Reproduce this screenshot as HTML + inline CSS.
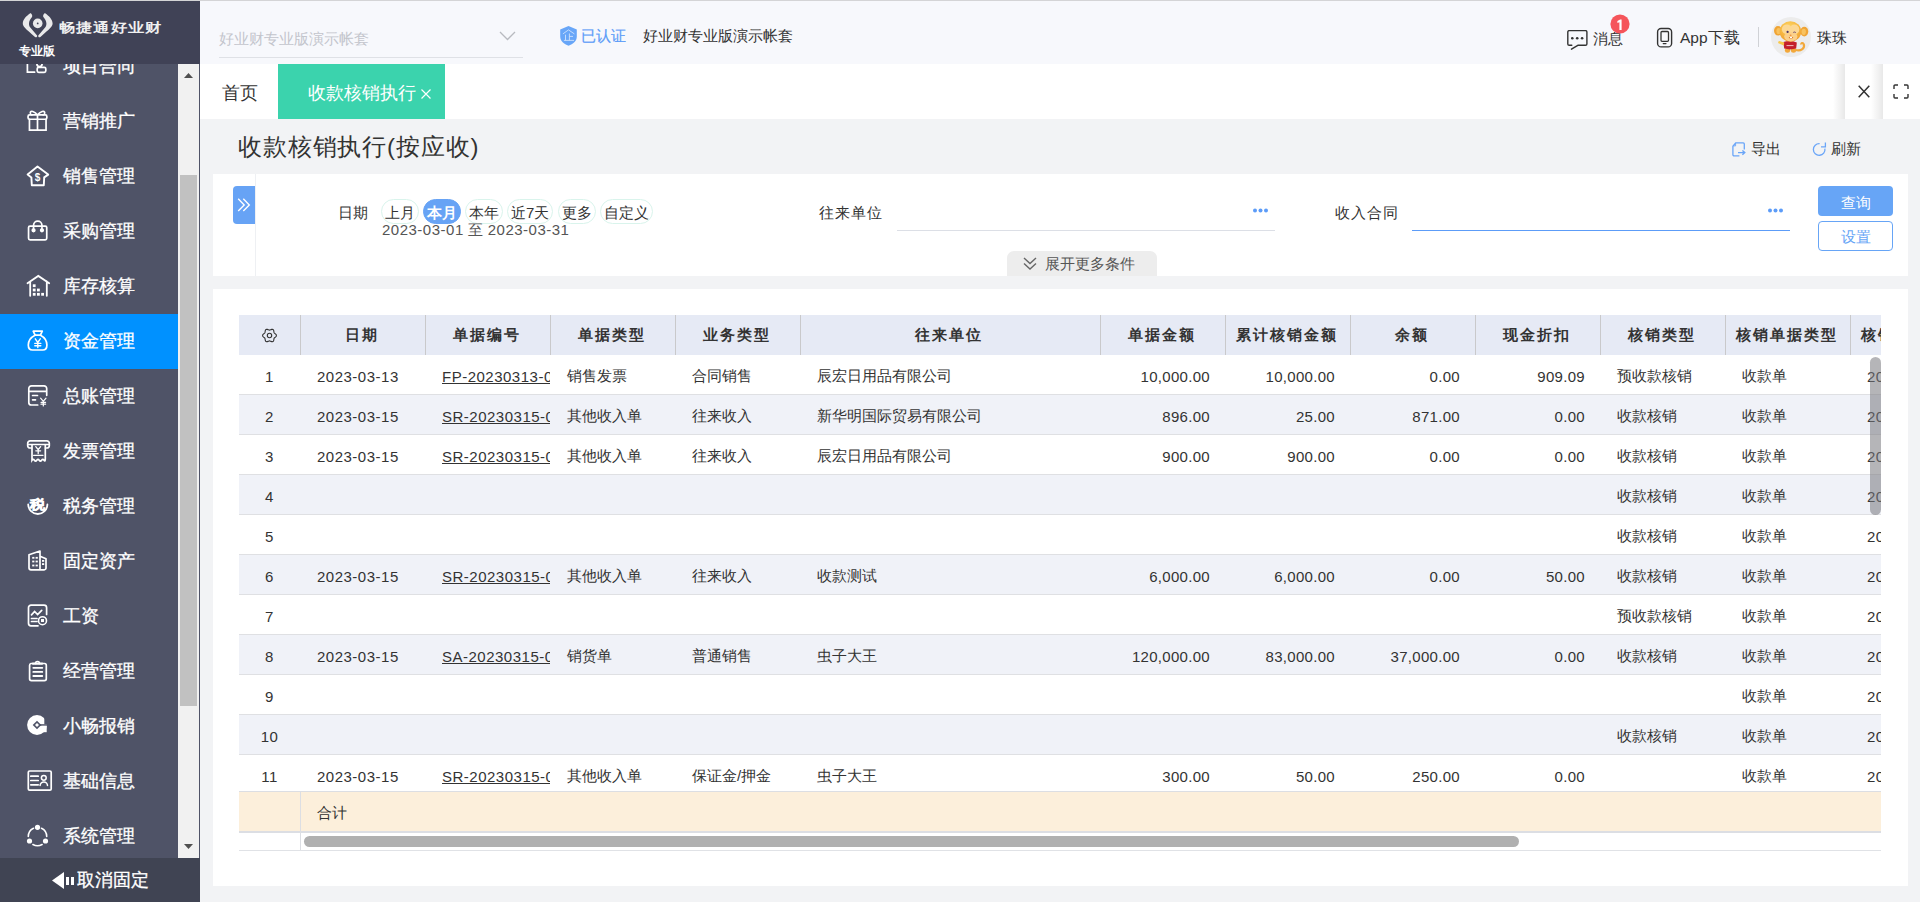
<!DOCTYPE html>
<html><head><meta charset="utf-8">
<style>
*{box-sizing:border-box;margin:0;padding:0}
html,body{width:1920px;height:902px;overflow:hidden;background:#f2f3f5;font-family:"Liberation Sans",sans-serif;color:#333}
.abs{position:absolute}
#topline{left:0;top:0;width:1920px;height:1px;background:#d4d4d6;z-index:20}
/* sidebar */
#side{left:0;top:0;width:200px;height:902px;background:#4f5367;overflow:hidden}
#logo{left:0;top:1px;width:200px;height:63px;background:#404256;z-index:5}
#menu{left:0;top:0;width:178px;height:902px}
.mi{position:absolute;left:0;width:178px;height:55px;color:#fff;font-size:18px;line-height:55px}
.mi.on{background:#0091ff}
.mi svg{position:absolute;left:25px;top:14px;width:28px;height:28px;overflow:visible}
.mi span{position:absolute;left:62.5px;top:0;-webkit-text-stroke:0.3px #fff}
#strack{left:178px;top:64px;width:21px;height:794px;background:#f1f1f1}
#sthumb{left:180px;top:175px;width:17px;height:531px;background:#c1c1c1}
#sline{left:199px;top:64px;width:1px;height:794px;background:#4f5367}
#unpin{left:0;top:858px;width:200px;height:44px;background:#404453;color:#fff;font-size:18px;line-height:44px;z-index:5}
/* header */
#hdr{left:200px;top:0;width:1720px;height:64px;background:#f7f8fc}
#tabs{left:200px;top:64px;width:1720px;height:55px;background:#fff}
.chip{position:absolute;top:25px;height:25px;padding:0 3px;border:1px solid #d9f4ec;border-radius:13px;font-size:15px;line-height:25px;color:#333;white-space:nowrap}
.chip.on{background:#67a3f5;border-color:#67a3f5;color:#fff;font-weight:bold}
.num{font-size:15px;letter-spacing:0.5px}
.th{position:absolute;top:0;height:40px;line-height:40px;text-align:center;font-size:15px;font-weight:bold;letter-spacing:2px;text-indent:-2px;color:#333;white-space:nowrap;overflow:hidden}
.td{position:absolute;height:40px;line-height:42px;font-size:15px;color:#333;white-space:nowrap;overflow:hidden;padding-left:17px}
.td.c{padding:0;text-align:center}
.td.r{padding:0 15px 0 0;text-align:right}
.td.u .num{text-decoration:underline}
.td .num{position:relative;top:1px;font-size:15px;letter-spacing:0.5px;color:#333}
.td.r .num{letter-spacing:0.3px}
</style></head><body>
<div id="topline" class="abs"></div>
<div id="side" class="abs">
  <div id="menu" class="abs">
    <div class="mi" style="top:39px"><svg viewBox="0 0 28 28" fill="none" stroke="#fff" stroke-width="1.7" stroke-linecap="round"><path d="M2.4 5V19.2H9.6M6.6 9.4H10.6"/><circle cx="14.5" cy="11" r="2.6"/><rect x="12.2" y="14.3" width="8.6" height="5" rx="1.5"/></svg><span>项目合同</span></div>
    <div class="mi" style="top:94px"><svg viewBox="0 0 28 28" fill="none" stroke="#fff" stroke-width="1.7" stroke-linecap="round"><rect x="3.05" y="6.95" width="18.8" height="4.3" rx="1.5"/><path d="M4.45 11.3V22.05H21.05V11.3M12.5 7V22M12.5 7C10 3.5 5 1.8 5.3 5C5.5 6.5 6 7 6.8 7M12.5 7C15 3.5 20 1.8 19.7 5C19.5 6.5 19 7 18.2 7"/></svg><span>营销推广</span></div>
    <div class="mi" style="top:149px"><svg viewBox="0 0 28 28" fill="none" stroke="#fff" stroke-width="1.7" stroke-linecap="round"><path d="M12.5 3.6L23.2 11.6L19.2 14.4L18.8 22.2H6.8L6.4 14.4L2.6 11.6Z" stroke-width="1.9" stroke-linejoin="round"/><text x="12.6" y="17.6" fill="#fff" stroke="none" font-size="10" font-weight="bold" text-anchor="middle" font-family="Liberation Sans">$</text></svg><span>销售管理</span></div>
    <div class="mi" style="top:204px"><svg viewBox="0 0 28 28" fill="none" stroke="#fff" stroke-width="1.7" stroke-linecap="round"><rect x="3.55" y="8.05" width="18.2" height="13.8" rx="1.5"/><path d="M8.55 12.3V7.25A4.2 4.2 0 0 1 16.95 7.25V12.3"/><circle cx="8.55" cy="12.3" r="1.3" fill="#fff"/><circle cx="16.95" cy="12.3" r="1.3" fill="#fff"/></svg><span>采购管理</span></div>
    <div class="mi" style="top:259px"><svg viewBox="0 0 28 28" fill="none" stroke="#fff" stroke-width="1.7" stroke-linecap="round"><path d="M2.5 10.2L13.3 2.9L24.2 10.2M5.2 8.5V22.8M21.8 8.5V22.8" stroke-width="1.8"/><g fill="#fff" stroke="none"><rect x="7.8" y="11.3" width="2.8" height="2.8"/><rect x="7.8" y="15.6" width="2.8" height="2.8"/><rect x="12" y="15.6" width="2.8" height="2.8"/><rect x="7.8" y="19.9" width="2.8" height="2.8"/><rect x="12" y="19.9" width="2.8" height="2.8"/><rect x="16.2" y="19.9" width="2.8" height="2.8"/></g></svg><span>库存核算</span></div>
    <div class="mi on" style="top:314px"><svg viewBox="0 0 28 28" fill="none" stroke="#fff" stroke-width="1.7" stroke-linecap="round"><path d="M8.2 3.2H17.3L15.4 7.2H10.1Z" stroke-linejoin="round"/><path d="M10 7.2C5.5 9.5 3.3 13 3.3 17C3.3 20.5 4.8 22 7.5 22H17.8C20.5 22 21.9 20.5 21.9 17C21.9 13 19.8 9.5 15.5 7.2"/><path d="M10.3 10.8L12.8 14.5L15.3 10.8M12.8 14.5V19.5M9.8 15.4H15.8M9.8 17.7H15.8" stroke-width="1.4"/></svg><span>资金管理</span></div>
    <div class="mi" style="top:369px"><svg viewBox="0 0 28 28" fill="none" stroke="#fff" stroke-width="1.7" stroke-linecap="round"><path d="M12.7 22H6.3A2.5 2.5 0 0 1 3.8 19.5V5.6A2.7 2.7 0 0 1 6.5 2.9H19A2.7 2.7 0 0 1 21.7 5.6V12.3M3.8 8.3H21.7"/><path d="M7.6 12.5H12.5M7.6 16.8H10.5" stroke-width="1.7"/><path d="M15.6 15.2L18.3 18.4L21 15.2M18.3 18.4V23M16 19.3H20.6M16 21.2H20.6" stroke-width="1.2"/></svg><span>总账管理</span></div>
    <div class="mi" style="top:424px"><svg viewBox="0 0 28 28" fill="none" stroke="#fff" stroke-width="1.7" stroke-linecap="round"><path d="M6.5 10H5A2.3 2.3 0 0 1 2.7 7.7V5.3A2.4 2.4 0 0 1 5.1 2.9H21.9A2.4 2.4 0 0 1 24.3 5.3V7.7A2.3 2.3 0 0 1 22 10H20.6M3.5 6.5H23.5"/><path d="M7 7V22.3Q8.2 20.6 9.4 22.3T11.8 22.3T14.2 22.3T16.6 22.3T19 22.3T20.3 21V7" stroke-width="1.7"/><path d="M10.8 8.6L13.2 11.6L15.6 8.6M13.2 11.6V15.5M10.8 12.8H15.6M8.6 17.3H18" stroke-width="1.3"/></svg><span>发票管理</span></div>
    <div class="mi" style="top:479px"><svg viewBox="0 0 28 28" fill="none" stroke="#fff" stroke-width="1.7" stroke-linecap="round"><path d="M3.2 11.4A9.6 9.6 0 0 0 22.4 11.4" stroke-width="1.8"/><text x="0" y="0" transform="translate(12.7 15.6) scale(1.05 0.9)" fill="#fff" stroke="#fff" stroke-width="0.6" font-size="15" font-weight="bold" text-anchor="middle">税</text></svg><span>税务管理</span></div>
    <div class="mi" style="top:534px"><svg viewBox="0 0 28 28" fill="none" stroke="#fff" stroke-width="1.7" stroke-linecap="round"><path d="M15 21.8V3L4 6.8V19.8A2 2 0 0 0 6 21.8H19.2A1.8 1.8 0 0 0 21 20V10.8L15 8.2" stroke-linejoin="round"/><g fill="#fff" stroke="none"><rect x="7.2" y="8.9" width="2.2" height="1.8"/><rect x="10.6" y="8.9" width="2.2" height="1.8"/><rect x="7.2" y="12.6" width="2.2" height="1.8"/><rect x="10.6" y="12.6" width="2.2" height="1.8"/><rect x="7.2" y="16.6" width="2.2" height="1.8"/><rect x="10.6" y="16.6" width="2.2" height="1.8"/><rect x="17" y="12" width="2.2" height="1.8"/><rect x="17" y="15.2" width="2.2" height="1.8"/></g></svg><span>固定资产</span></div>
    <div class="mi" style="top:589px"><svg viewBox="0 0 28 28" fill="none" stroke="#fff" stroke-width="1.7" stroke-linecap="round"><path d="M13 22.8H6A2.5 2.5 0 0 1 3.5 20.3V4.8A2.6 2.6 0 0 1 6.1 2.2H19A2.6 2.6 0 0 1 21.6 4.8V11.5"/><path d="M6.5 11.8L9.6 8.5L12.6 11.5L16.7 7.4M6.5 15.5H12M6.5 18.5H12" stroke-width="1.7"/><circle cx="17.5" cy="17.7" r="4" stroke-width="1.6"/><rect x="16" y="16" width="3" height="3" fill="#fff" stroke="none"/></svg><span>工资</span></div>
    <div class="mi" style="top:644px"><svg viewBox="0 0 28 28" fill="none" stroke="#fff" stroke-width="1.7" stroke-linecap="round"><path d="M8 5.5H6A1.9 1.9 0 0 0 4.6 7.4V20.8A1.9 1.9 0 0 0 6.5 22.7H19.4A1.9 1.9 0 0 0 21.3 20.8V7.4A1.9 1.9 0 0 0 19.5 5.5H17M10.5 5.5A2 2 0 0 1 14.5 5.5"/><path d="M8 5.7H17" stroke-width="2.2"/><path d="M8.3 9.8H17.3M8.3 13.9H17.3M8.3 18H17.3" stroke-width="1.8"/></svg><span>经营管理</span></div>
    <div class="mi" style="top:699px"><svg viewBox="0 0 28 28" fill="none" stroke="#fff" stroke-width="1.7" stroke-linecap="round"><circle cx="12" cy="12" r="9.9" fill="#fff" stroke="none"/><path d="M19.3 0H26V11.3H19.3Z" fill="#4f5367" stroke="none"/><rect x="14.5" y="11.2" width="10" height="1.6" fill="#4f5367" stroke="none"/><path d="M12 7.7L16.3 12L12 16.3L7.7 12Z" fill="#4f5367" stroke="none"/><path d="M12 10L14 12L12 14L10 12Z" fill="#fff" stroke="none"/><rect x="16.5" y="12.8" width="5.2" height="6.4" fill="#fff" stroke="none"/></svg><span>小畅报销</span></div>
    <div class="mi" style="top:754px"><svg viewBox="0 0 28 28" fill="none" stroke="#fff" stroke-width="1.7" stroke-linecap="round"><rect x="3.3" y="3" width="22.9" height="19.2" rx="1.3"/><path d="M5.8 8.2H13.2M5.8 12.5H13.2M5.8 16.8H13.2" stroke-width="1.7"/><circle cx="18.8" cy="9.8" r="2.4" stroke-width="1.5"/><path d="M15.1 17.6A3.7 3.7 0 0 1 22.5 17.6" stroke-width="1.5"/></svg><span>基础信息</span></div>
    <div class="mi" style="top:809px"><svg viewBox="0 0 28 28" fill="none" stroke="#fff" stroke-width="1.7" stroke-linecap="round"><path d="M8.47 5.23 A9.2 9.2 0 0 0 3.30 13.50 M16.53 5.23 A9.2 9.2 0 0 1 21.70 13.50 M17.10 21.47 A9.2 9.2 0 0 1 7.90 21.47" stroke-width="1.6"/><circle cx="12.5" cy="4.3" r="2.6" fill="#fff" stroke="none"/><circle cx="4.5" cy="18" r="2.6" fill="#fff" stroke="none"/><circle cx="20.5" cy="18" r="2.6" fill="#fff" stroke="none"/></svg><span>系统管理</span></div>
  </div>
  <div id="logo" class="abs">
    <svg class="abs" style="left:18px;top:8px" width="40" height="32" viewBox="0 0 40 32"><path d="M12.2 4.2C8.5 6.8 4.8 10.5 4.8 14.5C4.8 17.3 7 19.3 17 28C18.3 28.9 19.5 27.8 19.1 26.5L12.3 18.6C11.4 17.5 11 16.2 11 14.5C11 11.8 12.5 9.8 14 7.9C14.7 6.8 13.6 3.9 12.2 4.2Z" fill="#e9e9ea"/><path d="M27.2 4.2C30.9 6.8 34.6 10.5 34.6 14.5C34.6 17.3 32.4 19.3 22.4 28C21.1 28.9 19.9 27.8 20.3 26.5L27.1 18.6C28 17.5 28.4 16.2 28.4 14.5C28.4 11.8 26.9 9.8 25.4 7.9C24.7 6.8 25.8 3.9 27.2 4.2Z" fill="#e9e9ea"/><circle cx="19.7" cy="14.4" r="4.8" fill="#e9e9ea"/><circle cx="19.7" cy="14.4" r="0.9" fill="#404256"/></svg>
    <div class="abs" style="left:59px;top:17px;font-size:16px;line-height:20px;color:#f0f0f0;font-weight:bold;letter-spacing:1.2px;transform:scaleY(0.8);transform-origin:0 50%">畅捷通好业财</div>
    <div class="abs" style="left:19px;top:42px;font-size:12px;line-height:16px;color:#fff;font-weight:bold">专业版</div>
  </div>
  <div id="strack" class="abs"></div>
  <div id="sthumb" class="abs"></div>
  <div id="sline" class="abs"></div>
  <svg class="abs" style="left:184px;top:73px" width="9" height="5"><path d="M0 5L4.5 0 9 5z" fill="#505050"/></svg>
  <svg class="abs" style="left:184px;top:844px" width="9" height="5"><path d="M0 0h9L4.5 5z" fill="#505050"/></svg>
  <div id="unpin" class="abs">
    <svg class="abs" style="left:52px;top:14px" width="24" height="17" viewBox="0 0 24 17"><path d="M12 0v17L0 8.5z" fill="#fff"/><rect x="14" y="5" width="3" height="8" fill="#fff"/><rect x="19" y="5" width="3" height="8" fill="#fff"/></svg>
    <span class="abs" style="left:77px;top:0;-webkit-text-stroke:0.3px #fff">取消固定</span>
  </div>
</div>
<div id="hdr" class="abs">
  <div class="abs" style="left:19px;top:28px;font-size:15px;line-height:22px;color:#c3c5cc">好业财专业版演示帐套</div>
  <div class="abs" style="left:19px;top:57px;width:304px;height:1px;background:#dfe1e6"></div>
  <svg class="abs" style="left:299px;top:31px" width="17" height="10" viewBox="0 0 17 10"><path d="M1 1l7.5 7.5L16 1" fill="none" stroke="#b8bac0" stroke-width="1.3"/></svg>
  <svg class="abs" style="left:360px;top:26px" width="17" height="20" viewBox="0 0 17 20"><path d="M8.5 0L16.8 3.5V10.5C16.8 15 13 18.2 8.5 19.8C4 18.2 0.2 15 0.2 10.5V3.5Z" fill="#68a6f8"/><path d="M2.9 7.9L8.5 3.9L14.4 7.9M9.4 7.5V14.4M9.4 10.4H13M5.5 8.7V14.4M3.9 14.4H14" fill="none" stroke="#dbe9fd" stroke-width="0.8"/></svg>
  <div class="abs" style="left:381px;top:26px;font-size:15px;line-height:20px;color:#5c9cf8;-webkit-text-stroke:0.2px #5c9cf8">已认证</div>
  <div class="abs" style="left:443px;top:26px;font-size:15px;line-height:20px;color:#333">好业财专业版演示帐套</div>
  <svg class="abs" style="left:1367px;top:30px" width="21" height="21" viewBox="0 0 21 21"><path d="M4.8 15.3H2.2A1.4 1.4 0 0 1 0.8 13.9V2A1.4 1.4 0 0 1 2.2 0.6H18.5A1.4 1.4 0 0 1 19.9 2V13.9A1.4 1.4 0 0 1 18.5 15.3H10.8L4.5 19.2" fill="none" stroke="#333" stroke-width="1.4" stroke-linejoin="round" stroke-linecap="round"/><circle cx="5.3" cy="8.2" r="1.3" fill="#333"/><circle cx="10.2" cy="8.2" r="1.3" fill="#333"/><circle cx="15.1" cy="8.2" r="1.3" fill="#333"/></svg>
  <div class="abs" style="left:1393px;top:29px;font-size:15px;line-height:20px;color:#333">消息</div>
  <svg class="abs" style="left:1410px;top:14px" width="20" height="20" viewBox="0 0 20 20"><circle cx="10" cy="10" r="9.6" fill="#f5555b"/><path d="M10.1 5.4H11.6V16H9.4V8.3L7.4 9V7Z" fill="#fff"/></svg>
  <svg class="abs" style="left:1456px;top:27px" width="17" height="21" viewBox="0 0 17 21"><rect x="1.6" y="1.5" width="14" height="18.4" rx="3.5" fill="none" stroke="#333" stroke-width="1.4"/><rect x="5" y="4.5" width="7.5" height="9.8" rx="1" fill="none" stroke="#333" stroke-width="1.3"/><path d="M7.2 16.6H10" stroke="#333" stroke-width="1.2" stroke-linecap="round"/></svg>
  <div class="abs" style="left:1480px;top:28px;font-size:15.5px;line-height:20px;color:#333">App下载</div>
  <div class="abs" style="left:1558px;top:27px;width:1px;height:20px;background:#d0d2d6"></div>
  <div class="abs" style="left:1571px;top:17px;width:40px;height:40px;border-radius:50%;background:#ececec;overflow:hidden">
    <svg width="40" height="40" viewBox="0 0 40 40">
      <defs><radialGradient id="hg" cx="0.45" cy="0.3" r="0.75"><stop offset="0" stop-color="#fdd866"/><stop offset="0.6" stop-color="#f6b53e"/><stop offset="1" stop-color="#ee9a30"/></radialGradient></defs>
      <path d="M24.5 33C30.5 34.5 34 31 32.8 27.3C32 25.3 30 25.8 30.3 27.5" fill="none" stroke="#f2a83a" stroke-width="2.2"/>
      <ellipse cx="16.5" cy="33.3" rx="2.6" ry="2.5" fill="#f3a83a"/><ellipse cx="22.5" cy="33.3" rx="2.6" ry="2.5" fill="#f3a83a"/>
      <path d="M12.3 25Q19 22.8 25.8 25.4L25.2 31.6Q19 33.2 13.2 31.6Z" fill="#c41f2b"/>
      <path d="M8.5 28.5l4.4-.3l-.3 2.2l-4.3.4z" fill="#fff" opacity="0"/>
      <path d="M13.3 25.6L8.3 24Q6.6 24.4 7.4 26.3L12.8 28.6Z" fill="#f8c94a"/>
      <rect x="15.5" y="28" width="7" height="1.1" fill="#f5d0d0" opacity="0.8"/>
      <ellipse cx="7" cy="13.8" rx="4" ry="4.8" fill="#f0a434"/><ellipse cx="7.6" cy="14" rx="2.2" ry="3.1" fill="#f8c25e"/>
      <ellipse cx="33.3" cy="14.6" rx="4" ry="4.8" fill="#f0a434"/><ellipse cx="32.7" cy="14.8" rx="2.2" ry="3.1" fill="#f8c25e"/>
      <ellipse cx="19.4" cy="14.5" rx="10.8" ry="10.3" fill="url(#hg)"/>
      <circle cx="15.8" cy="12.3" r="4.9" fill="#fcd894"/><circle cx="23.4" cy="12.5" r="4.9" fill="#fcd894"/>
      <ellipse cx="19.8" cy="19.6" rx="6.6" ry="4.9" fill="#fbd08a"/>
      <circle cx="16.6" cy="14.9" r="1.1" fill="#4a3065"/>
      <path d="M22.3 15.4Q23.6 14.6 24.8 15.5" fill="none" stroke="#5a3a6a" stroke-width="0.9"/>
      <ellipse cx="19.6" cy="18.2" rx="1" ry="0.7" fill="#ef8e3e"/>
      <path d="M17.6 20Q20 23.8 22.4 20Z" fill="#d9782b"/><rect x="19" y="20" width="2" height="1.3" fill="#fff"/>
    </svg>
  </div>
  <div class="abs" style="left:1617px;top:28px;font-size:15px;line-height:20px;color:#333">珠珠</div>
</div>
<div id="tabs" class="abs">
  <div class="abs" style="left:22px;top:82px;font-size:18px;line-height:22px;color:#333;top:18px">首页</div>
  <div class="abs" style="left:78px;top:0;width:167px;height:55px;background:#3bd3ad"></div>
  <div class="abs" style="left:108px;top:18px;font-size:18px;line-height:22px;color:#fff">收款核销执行</div>
  <svg class="abs" style="left:221px;top:25px" width="10" height="10" viewBox="0 0 10 10"><path d="M0.5 0.5l9 9M9.5 0.5l-9 9" stroke="#fff" stroke-width="1.2"/></svg>
  <div class="abs" style="left:1633px;top:0;width:12px;height:55px;background:linear-gradient(to right,rgba(0,0,0,0),rgba(0,0,0,0.09))"></div><div class="abs" style="left:1645px;top:0;width:38px;height:55px;background:#fff"></div>
  <svg class="abs" style="left:1658px;top:85px;top:21px" width="12" height="13" viewBox="0 0 12 13"><path d="M0.7 0.7l10.6 11.6M11.3 0.7L0.7 12.3" stroke="#333" stroke-width="1.5"/></svg>
  <div class="abs" style="left:1671px;top:0;width:12px;height:55px;background:linear-gradient(to right,rgba(0,0,0,0),rgba(0,0,0,0.09))"></div><div class="abs" style="left:1683px;top:0;width:37px;height:55px;background:#fff"></div>
  <svg class="abs" style="left:1693px;top:20px" width="16" height="15" viewBox="0 0 16 15"><path d="M1 5V2a1 1 0 0 1 1-1h3M11 1h3a1 1 0 0 1 1 1v3M15 10v3a1 1 0 0 1-1 1h-3M5 14H2a1 1 0 0 1-1-1v-3" fill="none" stroke="#333" stroke-width="1.4"/></svg>
</div>
<div id="title" class="abs" style="left:238px;top:132px;font-size:24px;line-height:30px;color:#333;letter-spacing:0.85px">收款核销执行(按应收)</div>
<svg class="abs" style="left:1732px;top:142px" width="14" height="15" viewBox="0 0 14 15"><path d="M7.4 13.9H2A1.1 1.1 0 0 1 0.9 12.8V4.2L3.9 0.8H11.2A1.1 1.1 0 0 1 12.3 1.9V7.4" fill="none" stroke="#6aa5f8" stroke-width="1.3" stroke-linejoin="round"/><path d="M1.6 3.9H3.6V1.8" fill="none" stroke="#6aa5f8" stroke-width="0.9"/><path d="M6 10.6H12.6M10.4 8.4L12.8 10.6L10.4 12.8" fill="none" stroke="#6aa5f8" stroke-width="1.4"/></svg>
<div class="abs" style="left:1751px;top:139px;font-size:15px;line-height:20px;color:#333">导出</div>
<svg class="abs" style="left:1811px;top:141px" width="16" height="16" viewBox="0 0 16 16"><path d="M8.6 2.7A5.8 5.8 0 1 0 13.9 7.6" fill="none" stroke="#6aa5f8" stroke-width="1.3"/><path d="M14.4 1.4V5.9H10" fill="none" stroke="#6aa5f8" stroke-width="1.3"/></svg>
<div class="abs" style="left:1831px;top:139px;font-size:15px;line-height:20px;color:#333">刷新</div>

<div id="filter" class="abs" style="left:213px;top:174px;width:1695px;height:102px;background:#fff">
  <div class="abs" style="left:42px;top:0;width:1px;height:102px;background:#eef0f3"></div>
  <div class="abs" style="left:20px;top:12px;width:22px;height:38px;background:#67a3f5;border-radius:4px 0 0 4px"></div>
  <svg class="abs" style="left:24px;top:23.5px" width="14" height="14" viewBox="0 0 14 14"><path d="M1.2 0.8l6 6.1-6 6.1M6.3 0.8l6 6.1-6 6.1" fill="none" stroke="#fff" stroke-width="1.4"/></svg>
  <div class="abs" style="left:125px;top:29px;font-size:15px;line-height:20px;color:#333">日期</div>
  <div class="chip" style="left:168px">上月</div>
  <div class="chip on" style="left:210px">本月</div>
  <div class="chip" style="left:252px">本年</div>
  <div class="chip" style="left:294px">近<span class="n7">7</span>天</div>
  <div class="chip" style="left:345px">更多</div>
  <div class="chip" style="left:387px">自定义</div>
  <div class="abs" style="left:169px;top:47px;font-size:15px;line-height:18px;color:#555"><span class="num">2023-03-01</span><span style="margin:0 4.5px">至</span><span class="num">2023-03-31</span></div>
  <div class="abs" style="left:606px;top:29px;font-size:15px;line-height:20px;color:#333;letter-spacing:1px">往来单位</div>
  <div class="abs" style="left:684px;top:56px;width:378px;height:1px;background:#dcdfe6"></div>
  <svg class="abs" style="left:1040px;top:34px" width="15" height="5"><circle cx="2" cy="2.5" r="2" fill="#5c9cf8"/><circle cx="7.5" cy="2.5" r="2" fill="#5c9cf8"/><circle cx="13" cy="2.5" r="2" fill="#5c9cf8"/></svg>
  <div class="abs" style="left:1122px;top:29px;font-size:15px;line-height:20px;color:#333;letter-spacing:1px">收入合同</div>
  <div class="abs" style="left:1199px;top:56px;width:378px;height:1px;background:#5c9cf8"></div>
  <svg class="abs" style="left:1555px;top:34px" width="15" height="5"><circle cx="2" cy="2.5" r="2" fill="#5c9cf8"/><circle cx="7.5" cy="2.5" r="2" fill="#5c9cf8"/><circle cx="13" cy="2.5" r="2" fill="#5c9cf8"/></svg>
  <div class="abs" style="left:1605px;top:12px;width:75px;height:30px;background:#67a5f6;border-radius:4px;color:#fff;font-size:15px;line-height:34px;text-align:center">查询</div>
  <div class="abs" style="left:1605px;top:47px;width:75px;height:30px;border:1px solid #67a5f6;border-radius:4px;color:#67a5f6;font-size:15px;line-height:30px;text-align:center">设置</div>
  <div class="abs" style="left:794px;top:77px;width:150px;height:25px;background:#ededed;border-radius:7px 7px 0 0"></div>
  <svg class="abs" style="left:810px;top:83px" width="14" height="13" viewBox="0 0 14 13"><path d="M1 1l6 5.5L13 1M1 6.5l6 5.5 6-5.5" fill="none" stroke="#666" stroke-width="1.4"/></svg>
  <div class="abs" style="left:832px;top:80px;font-size:15px;line-height:20px;color:#555">展开更多条件</div>
</div>
<div id="tpanel" class="abs" style="left:213px;top:289px;width:1695px;height:597px;background:#fff"></div>
<div id="tbl" class="abs" style="left:239px;top:315px;width:1642px;height:536px;overflow:hidden">
<div class="abs" style="left:0;top:0;width:1642px;height:40px;background:#e6eaf5"></div>
<svg class="abs" style="left:22.8px;top:12.5px" width="15" height="15" viewBox="0 0 15 15"><path d="M14.40 7.50 L14.27 8.09 L13.90 8.63 L13.39 9.08 L12.89 9.46 L12.46 9.81 L12.16 10.19 L11.99 10.64 L11.90 11.19 L11.81 11.81 L11.68 12.48 L11.40 13.06 L10.95 13.48 L10.37 13.66 L9.72 13.61 L9.08 13.39 L8.50 13.15 L7.98 12.96 L7.50 12.88 L7.02 12.96 L6.50 13.15 L5.92 13.39 L5.28 13.61 L4.63 13.66 L4.05 13.48 L3.60 13.06 L3.32 12.48 L3.19 11.81 L3.10 11.19 L3.01 10.64 L2.84 10.19 L2.54 9.81 L2.11 9.46 L1.61 9.08 L1.10 8.63 L0.73 8.09 L0.60 7.50 L0.73 6.91 L1.10 6.37 L1.61 5.92 L2.11 5.54 L2.54 5.19 L2.84 4.81 L3.01 4.36 L3.10 3.81 L3.19 3.19 L3.32 2.52 L3.60 1.94 L4.05 1.52 L4.63 1.34 L5.28 1.39 L5.92 1.61 L6.50 1.85 L7.02 2.04 L7.50 2.12 L7.98 2.04 L8.50 1.85 L9.08 1.61 L9.72 1.39 L10.37 1.34 L10.95 1.52 L11.40 1.94 L11.68 2.52 L11.81 3.19 L11.90 3.81 L11.99 4.36 L12.16 4.81 L12.46 5.19 L12.89 5.54 L13.39 5.92 L13.90 6.37 L14.27 6.91Z" fill="none" stroke="#333" stroke-width="1.1" stroke-linejoin="round"/><circle cx="7.5" cy="7.5" r="2.2" fill="none" stroke="#333" stroke-width="1.1"/></svg>
<div class="abs" style="left:61px;top:0;width:1px;height:40px;background:#c9c9cb"></div>
<div class="th" style="left:61px;width:125px">日期</div>
<div class="abs" style="left:186px;top:0;width:1px;height:40px;background:#c9c9cb"></div>
<div class="th" style="left:186px;width:125px">单据编号</div>
<div class="abs" style="left:311px;top:0;width:1px;height:40px;background:#c9c9cb"></div>
<div class="th" style="left:311px;width:125px">单据类型</div>
<div class="abs" style="left:436px;top:0;width:1px;height:40px;background:#c9c9cb"></div>
<div class="th" style="left:436px;width:125px">业务类型</div>
<div class="abs" style="left:561px;top:0;width:1px;height:40px;background:#c9c9cb"></div>
<div class="th" style="left:561px;width:300px">往来单位</div>
<div class="abs" style="left:861px;top:0;width:1px;height:40px;background:#c9c9cb"></div>
<div class="th" style="left:861px;width:125px">单据金额</div>
<div class="abs" style="left:986px;top:0;width:1px;height:40px;background:#c9c9cb"></div>
<div class="th" style="left:986px;width:125px">累计核销金额</div>
<div class="abs" style="left:1111px;top:0;width:1px;height:40px;background:#c9c9cb"></div>
<div class="th" style="left:1111px;width:125px">余额</div>
<div class="abs" style="left:1236px;top:0;width:1px;height:40px;background:#c9c9cb"></div>
<div class="th" style="left:1236px;width:125px">现金折扣</div>
<div class="abs" style="left:1361px;top:0;width:1px;height:40px;background:#c9c9cb"></div>
<div class="th" style="left:1361px;width:125px">核销类型</div>
<div class="abs" style="left:1486px;top:0;width:1px;height:40px;background:#c9c9cb"></div>
<div class="th" style="left:1486px;width:125px">核销单据类型</div>
<div class="abs" style="left:1611px;top:0;width:1px;height:40px;background:#c9c9cb"></div>
<div class="th" style="left:1611px;width:125px">核销单据编号</div>
<div class="abs" style="left:0;top:40px;width:1642px;height:40px;background:#fff"></div>
<div class="abs" style="left:0;top:79px;width:1642px;height:1px;background:#dfe0e3"></div>
<div class="td c" style="left:0px;top:40px;width:61px"><span class="num">1</span></div>
<div class="td" style="left:61px;top:40px;width:125px"><span class="num">2023-03-13</span></div>
<div class="td u" style="left:186px;top:40px;width:125px"><span class="num">FP-20230313-0001</span></div>
<div class="td" style="left:311px;top:40px;width:125px">销售发票</div>
<div class="td" style="left:436px;top:40px;width:125px">合同销售</div>
<div class="td" style="left:561px;top:40px;width:300px">辰宏日用品有限公司</div>
<div class="td r" style="left:861px;top:40px;width:125px"><span class="num">10,000.00</span></div>
<div class="td r" style="left:986px;top:40px;width:125px"><span class="num">10,000.00</span></div>
<div class="td r" style="left:1111px;top:40px;width:125px"><span class="num">0.00</span></div>
<div class="td r" style="left:1236px;top:40px;width:125px"><span class="num">909.09</span></div>
<div class="td" style="left:1361px;top:40px;width:125px">预收款核销</div>
<div class="td" style="left:1486px;top:40px;width:125px">收款单</div>
<div class="td" style="left:1611px;top:40px;width:125px"><span class="num">2023-03-13</span></div>
<div class="abs" style="left:0;top:80px;width:1642px;height:40px;background:#f0f2f8"></div>
<div class="abs" style="left:0;top:119px;width:1642px;height:1px;background:#dfe0e3"></div>
<div class="td c" style="left:0px;top:80px;width:61px"><span class="num">2</span></div>
<div class="td" style="left:61px;top:80px;width:125px"><span class="num">2023-03-15</span></div>
<div class="td u" style="left:186px;top:80px;width:125px"><span class="num">SR-20230315-0001</span></div>
<div class="td" style="left:311px;top:80px;width:125px">其他收入单</div>
<div class="td" style="left:436px;top:80px;width:125px">往来收入</div>
<div class="td" style="left:561px;top:80px;width:300px">新华明国际贸易有限公司</div>
<div class="td r" style="left:861px;top:80px;width:125px"><span class="num">896.00</span></div>
<div class="td r" style="left:986px;top:80px;width:125px"><span class="num">25.00</span></div>
<div class="td r" style="left:1111px;top:80px;width:125px"><span class="num">871.00</span></div>
<div class="td r" style="left:1236px;top:80px;width:125px"><span class="num">0.00</span></div>
<div class="td" style="left:1361px;top:80px;width:125px">收款核销</div>
<div class="td" style="left:1486px;top:80px;width:125px">收款单</div>
<div class="td" style="left:1611px;top:80px;width:125px"><span class="num">2023-03-15</span></div>
<div class="abs" style="left:0;top:120px;width:1642px;height:40px;background:#fff"></div>
<div class="abs" style="left:0;top:159px;width:1642px;height:1px;background:#dfe0e3"></div>
<div class="td c" style="left:0px;top:120px;width:61px"><span class="num">3</span></div>
<div class="td" style="left:61px;top:120px;width:125px"><span class="num">2023-03-15</span></div>
<div class="td u" style="left:186px;top:120px;width:125px"><span class="num">SR-20230315-0002</span></div>
<div class="td" style="left:311px;top:120px;width:125px">其他收入单</div>
<div class="td" style="left:436px;top:120px;width:125px">往来收入</div>
<div class="td" style="left:561px;top:120px;width:300px">辰宏日用品有限公司</div>
<div class="td r" style="left:861px;top:120px;width:125px"><span class="num">900.00</span></div>
<div class="td r" style="left:986px;top:120px;width:125px"><span class="num">900.00</span></div>
<div class="td r" style="left:1111px;top:120px;width:125px"><span class="num">0.00</span></div>
<div class="td r" style="left:1236px;top:120px;width:125px"><span class="num">0.00</span></div>
<div class="td" style="left:1361px;top:120px;width:125px">收款核销</div>
<div class="td" style="left:1486px;top:120px;width:125px">收款单</div>
<div class="td" style="left:1611px;top:120px;width:125px"><span class="num">2023-03-15</span></div>
<div class="abs" style="left:0;top:160px;width:1642px;height:40px;background:#f0f2f8"></div>
<div class="abs" style="left:0;top:199px;width:1642px;height:1px;background:#dfe0e3"></div>
<div class="td c" style="left:0px;top:160px;width:61px"><span class="num">4</span></div>
<div class="td" style="left:1361px;top:160px;width:125px">收款核销</div>
<div class="td" style="left:1486px;top:160px;width:125px">收款单</div>
<div class="td" style="left:1611px;top:160px;width:125px"><span class="num">2023-03-15</span></div>
<div class="abs" style="left:0;top:200px;width:1642px;height:40px;background:#fff"></div>
<div class="abs" style="left:0;top:239px;width:1642px;height:1px;background:#dfe0e3"></div>
<div class="td c" style="left:0px;top:200px;width:61px"><span class="num">5</span></div>
<div class="td" style="left:1361px;top:200px;width:125px">收款核销</div>
<div class="td" style="left:1486px;top:200px;width:125px">收款单</div>
<div class="td" style="left:1611px;top:200px;width:125px"><span class="num">2023-03-15</span></div>
<div class="abs" style="left:0;top:240px;width:1642px;height:40px;background:#f0f2f8"></div>
<div class="abs" style="left:0;top:279px;width:1642px;height:1px;background:#dfe0e3"></div>
<div class="td c" style="left:0px;top:240px;width:61px"><span class="num">6</span></div>
<div class="td" style="left:61px;top:240px;width:125px"><span class="num">2023-03-15</span></div>
<div class="td u" style="left:186px;top:240px;width:125px"><span class="num">SR-20230315-0003</span></div>
<div class="td" style="left:311px;top:240px;width:125px">其他收入单</div>
<div class="td" style="left:436px;top:240px;width:125px">往来收入</div>
<div class="td" style="left:561px;top:240px;width:300px">收款测试</div>
<div class="td r" style="left:861px;top:240px;width:125px"><span class="num">6,000.00</span></div>
<div class="td r" style="left:986px;top:240px;width:125px"><span class="num">6,000.00</span></div>
<div class="td r" style="left:1111px;top:240px;width:125px"><span class="num">0.00</span></div>
<div class="td r" style="left:1236px;top:240px;width:125px"><span class="num">50.00</span></div>
<div class="td" style="left:1361px;top:240px;width:125px">收款核销</div>
<div class="td" style="left:1486px;top:240px;width:125px">收款单</div>
<div class="td" style="left:1611px;top:240px;width:125px"><span class="num">2023-03-15</span></div>
<div class="abs" style="left:0;top:280px;width:1642px;height:40px;background:#fff"></div>
<div class="abs" style="left:0;top:319px;width:1642px;height:1px;background:#dfe0e3"></div>
<div class="td c" style="left:0px;top:280px;width:61px"><span class="num">7</span></div>
<div class="td" style="left:1361px;top:280px;width:125px">预收款核销</div>
<div class="td" style="left:1486px;top:280px;width:125px">收款单</div>
<div class="td" style="left:1611px;top:280px;width:125px"><span class="num">2023-03-15</span></div>
<div class="abs" style="left:0;top:320px;width:1642px;height:40px;background:#f0f2f8"></div>
<div class="abs" style="left:0;top:359px;width:1642px;height:1px;background:#dfe0e3"></div>
<div class="td c" style="left:0px;top:320px;width:61px"><span class="num">8</span></div>
<div class="td" style="left:61px;top:320px;width:125px"><span class="num">2023-03-15</span></div>
<div class="td u" style="left:186px;top:320px;width:125px"><span class="num">SA-20230315-0001</span></div>
<div class="td" style="left:311px;top:320px;width:125px">销货单</div>
<div class="td" style="left:436px;top:320px;width:125px">普通销售</div>
<div class="td" style="left:561px;top:320px;width:300px">虫子大王</div>
<div class="td r" style="left:861px;top:320px;width:125px"><span class="num">120,000.00</span></div>
<div class="td r" style="left:986px;top:320px;width:125px"><span class="num">83,000.00</span></div>
<div class="td r" style="left:1111px;top:320px;width:125px"><span class="num">37,000.00</span></div>
<div class="td r" style="left:1236px;top:320px;width:125px"><span class="num">0.00</span></div>
<div class="td" style="left:1361px;top:320px;width:125px">收款核销</div>
<div class="td" style="left:1486px;top:320px;width:125px">收款单</div>
<div class="td" style="left:1611px;top:320px;width:125px"><span class="num">2023-03-15</span></div>
<div class="abs" style="left:0;top:360px;width:1642px;height:40px;background:#fff"></div>
<div class="abs" style="left:0;top:399px;width:1642px;height:1px;background:#dfe0e3"></div>
<div class="td c" style="left:0px;top:360px;width:61px"><span class="num">9</span></div>
<div class="td" style="left:1486px;top:360px;width:125px">收款单</div>
<div class="td" style="left:1611px;top:360px;width:125px"><span class="num">2023-03-15</span></div>
<div class="abs" style="left:0;top:400px;width:1642px;height:40px;background:#f0f2f8"></div>
<div class="abs" style="left:0;top:439px;width:1642px;height:1px;background:#dfe0e3"></div>
<div class="td c" style="left:0px;top:400px;width:61px"><span class="num">10</span></div>
<div class="td" style="left:1361px;top:400px;width:125px">收款核销</div>
<div class="td" style="left:1486px;top:400px;width:125px">收款单</div>
<div class="td" style="left:1611px;top:400px;width:125px"><span class="num">2023-03-15</span></div>
<div class="abs" style="left:0;top:440px;width:1642px;height:40px;background:#fff"></div>
<div class="abs" style="left:0;top:479px;width:1642px;height:1px;background:#dfe0e3"></div>
<div class="td c" style="left:0px;top:440px;width:61px"><span class="num">11</span></div>
<div class="td" style="left:61px;top:440px;width:125px"><span class="num">2023-03-15</span></div>
<div class="td u" style="left:186px;top:440px;width:125px"><span class="num">SR-20230315-0004</span></div>
<div class="td" style="left:311px;top:440px;width:125px">其他收入单</div>
<div class="td" style="left:436px;top:440px;width:125px">保证金/押金</div>
<div class="td" style="left:561px;top:440px;width:300px">虫子大王</div>
<div class="td r" style="left:861px;top:440px;width:125px"><span class="num">300.00</span></div>
<div class="td r" style="left:986px;top:440px;width:125px"><span class="num">50.00</span></div>
<div class="td r" style="left:1111px;top:440px;width:125px"><span class="num">250.00</span></div>
<div class="td r" style="left:1236px;top:440px;width:125px"><span class="num">0.00</span></div>
<div class="td" style="left:1486px;top:440px;width:125px">收款单</div>
<div class="td" style="left:1611px;top:440px;width:125px"><span class="num">2023-03-15</span></div>
<div class="abs" style="left:0;top:476px;width:1642px;height:1px;background:#dcdee3"></div>
<div class="abs" style="left:0;top:477px;width:1642px;height:39px;background:#fcefdb"></div>
<div class="abs" style="left:61px;top:477px;width:1px;height:39px;background:#dcdee3"></div>
<div class="td" style="left:61px;top:477px;width:200px;height:39px;line-height:42px">合计</div>
<div class="abs" style="left:0;top:516px;width:1642px;height:2px;background:#dcdee3"></div>
<div class="abs" style="left:0;top:518px;width:1642px;height:17px;background:#fff"></div>
<div class="abs" style="left:61px;top:518px;width:1px;height:17px;background:#dcdee3"></div>
<div class="abs" style="left:65px;top:521px;width:1215px;height:11px;border-radius:6px;background:#b0b0b0"></div>
<div class="abs" style="left:0;top:535px;width:1642px;height:1px;background:#e0e2e6"></div>
<div class="abs" style="left:1631px;top:42px;width:11px;height:158px;border-radius:6px;background:rgba(120,120,125,0.55)"></div>
</div>
</body></html>
